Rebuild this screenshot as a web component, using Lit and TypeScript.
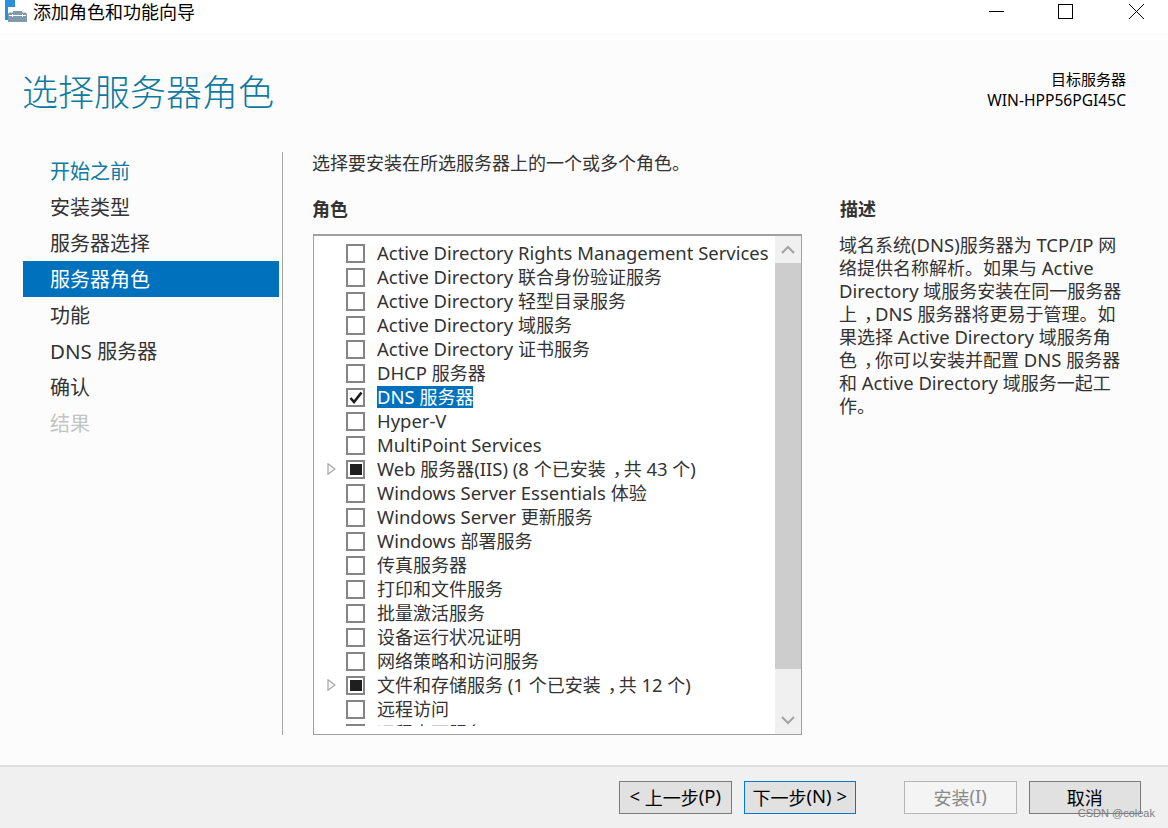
import { LitElement, html, css, svg } from "lit";
import { customElement } from "lit/decorators.js";

type Row = { t: string; s?: "checked" | "mixed"; exp?: boolean; sel?: boolean };
const rows: Row[] = [
  { t: "Active Directory Rights Management Services" },
  { t: "Active Directory 联合身份验证服务" },
  { t: "Active Directory 轻型目录服务" },
  { t: "Active Directory 域服务" },
  { t: "Active Directory 证书服务" },
  { t: "DHCP 服务器" },
  { t: "DNS 服务器", s: "checked", sel: true },
  { t: "Hyper-V" },
  { t: "MultiPoint Services" },
  { t: "Web 服务器(IIS) (8 个已安装，共 43 个)", s: "mixed", exp: true },
  { t: "Windows Server Essentials 体验" },
  { t: "Windows Server 更新服务" },
  { t: "Windows 部署服务" },
  { t: "传真服务器" },
  { t: "打印和文件服务" },
  { t: "批量激活服务" },
  { t: "设备运行状况证明" },
  { t: "网络策略和访问服务" },
  { t: "文件和存储服务 (1 个已安装，共 12 个)", s: "mixed", exp: true },
  { t: "远程访问" },
  { t: "远程桌面服务" },
];
const nav = [
  ["开始之前", "link"],
  ["安装类型", ""],
  ["服务器选择", ""],
  ["服务器角色", "active"],
  ["功能", ""],
  ["DNS 服务器", ""],
  ["确认", ""],
  ["结果", "off"],
];
const desc = [
  "域名系统(DNS)服务器为 TCP/IP 网",
  "络提供名称解析。如果与 Active",
  "Directory 域服务安装在同一服务器",
  "上，DNS 服务器将更易于管理。如",
  "果选择 Active Directory 域服务角",
  "色，你可以安装并配置 DNS 服务器",
  "和 Active Directory 域服务一起工",
  "作。",
];

/* Latin runs are set slightly larger than the CJK ones; the full-width comma sits centred in its cell. */
function rich(t: string) {
  return t.split(/([\x20-\x7e]+|，)/).filter(Boolean).map((p) =>
    p === "，"
      ? html`<span class="comma">，</span>`
      : /^[\x20-\x7e]/.test(p)
        ? html`<span class="la">${p}</span>`
        : p
  );
}

@customElement("app-root")
export class AppRoot extends LitElement {
  static styles = css`
    :host {
      display: block;
      width: 1168px;
      height: 828px;
      overflow: hidden;
      position: relative;
      background: #fcfcfc;
      color: #1a1a1a;
      font-family: "Noto Sans", "Noto Sans CJK SC", sans-serif;
      font-size: 18px;
    }
    .la { font-size: 1.025em; line-height: 1; white-space: pre; }
    .target .la { font-size: 1.04em; }
    .comma { padding-left: 7px; letter-spacing: -7px; }
    .app { display: flex; flex-direction: column; height: 828px; }
    .titlebar {
      height: 33px; flex: none; background: #fff;
      display: flex; align-items: flex-start;
    }
    .appicon { width: 28px; height: 24px; margin-left: 5px; flex: none; }
    .wintitle { line-height: 22px; margin-top: 1px; color: #000; flex: 1; }
    .winbtns { display: flex; }
    .winbtns svg { display: block; }
    .header {
      height: 119px; flex: none; display: flex; justify-content: space-between;
      padding: 0 42px 0 22px; box-sizing: border-box;
    }
    h1 {
      margin: 37px 0 0; font-size: 36px; font-weight: 300; line-height: 46px; color: #0f7a9e;
    }
    .target { margin-top: 36px; text-align: right; font-size: 15px; line-height: 21px; color: #000; }
    .main { flex: 1; display: flex; padding-bottom: 30px; min-height: 0; }
    .nav { width: 256px; margin-left: 23px; flex: none; padding-top: 1px; }
    .nav div { height: 36px; line-height: 38px; padding-left: 27px; font-size: 20px; color: #333; }
    .nav .link { color: #0f7a9e; }
    .nav .active { background: #0072bd; color: #fff; }
    .nav .off { color: #c4c4c4; }
    .sep { width: 1px; margin-left: 3px; background: #a6a6a6; flex: none; }
    .mid { width: 489px; margin-left: 30px; flex: none; display: flex; flex-direction: column; }
    .instr { line-height: 22px; height: 22px; color: #333; white-space: nowrap; margin-left: -1px; }
    .hd { font-weight: 700; line-height: 24px; height: 24px; margin-top: 23px; color: #333; margin-left: -1px; }
    .list {
      margin-top: 13px; flex: 1; min-height: 0; display: flex; box-sizing: border-box;
      border: 1px solid #a0a0a0; border-width: 2px 1px 1px 1px; background: #fff;
    }
    .rowswrap { flex: 1; overflow: hidden; margin-bottom: 8px; padding-top: 5px; }
    .row { height: 24px; display: flex; align-items: center; white-space: nowrap; color: #333; }
    .exp { width: 32px; flex: none; display: flex; justify-content: flex-end; padding-right: 10px; box-sizing: border-box; }
    .box {
      width: 19px; height: 19px; box-sizing: border-box; border: 2px solid #858585;
      flex: none; display: flex; align-items: center; justify-content: center;
      background: #fff;
    }
    .mark { width: 12px; height: 11px; background: #1f1f1f; }
    .lbl { margin-left: 12px; line-height: 22px; height: 22px; }
    .lbl.sel { background: #0072bd; color: #fff; }
    .sb { width: 26px; flex: none; background: #f0f0f0; display: flex; flex-direction: column; }
    .sbbtn { height: 27px; flex: none; display: flex; align-items: center; justify-content: center; }
    .thumb { height: 406px; flex: none; background: #cdcdcd; }
    .track { flex: 1; }
    .desc { margin-left: 38px; flex: 1; }
    .desc .hd { margin-top: 45px; margin-left: 0; }
    .desc .body { margin-top: 13px; margin-left: -1px; font-size: 18px; line-height: 23px; color: #333; white-space: nowrap; }
    .footer {
      height: 63px; flex: none; box-sizing: border-box; background: #f0f0f0;
      border-top: 2px solid #dfdfdf; display: flex; padding: 14px 27px 0 619px;
    }
    .btn {
      height: 33px; width: 113px; box-sizing: border-box; border: 1px solid #7a7a7a;
      background: #e1e1e1; display: flex; align-items: center; justify-content: center;
      font-size: 18px; color: #000; white-space: nowrap; padding-bottom: 2px;
    }
    .btn.def { border: 1px solid #0078d7; margin-left: 12px; }
    .btn.dis { border-color: #b5b5b5; background: #f4f4f4; color: #8a8a8a; margin-left: 48px; }
    .btn.cancel { margin-left: 12px; }
    .wm {
      position: absolute; right: 13px; top: 805px; font-size: 11px; line-height: 16px;
      color: #7f7f7f; font-family: "Liberation Sans", sans-serif;
    }
  `;

  private up = svg`<svg width="14" height="9" viewBox="0 0 14 9"><path d="M1 8 L7 2 L13 8" fill="none" stroke="#a3a3a3" stroke-width="2"/></svg>`;
  private down = svg`<svg width="14" height="9" viewBox="0 0 14 9"><path d="M1 1 L7 7 L13 1" fill="none" stroke="#a3a3a3" stroke-width="2"/></svg>`;

  private row(r: Row) {
    return html`<div class="row">
      <div class="exp">${r.exp
        ? html`<svg width="9" height="12" viewBox="0 0 9 12"><path d="M1 .8 L7.8 6 L1 11.2 Z" fill="none" stroke="#a6a6a6" stroke-width="1.2"/></svg>`
        : null}</div>
      <div class="box">
        ${r.s === "checked"
          ? html`<svg width="14" height="13" viewBox="0 0 14 13"><path d="M1.5 7 L5 11 L12.5 1.5" fill="none" stroke="#1a1a1a" stroke-width="2.6"/></svg>`
          : r.s === "mixed" ? html`<div class="mark"></div>` : null}
      </div>
      <span class="lbl ${r.sel ? "sel" : ""}">${rich(r.t)}</span>
    </div>`;
  }

  render() {
    return html`<div class="app">
      <div class="titlebar">
        <svg class="appicon" viewBox="0 0 28 24">
          <path d="M0 0H10V7H3V20H0Z" fill="#2b90d9"/>
          <path d="M3 22V14.5Q3 12.5 5 12.5H8V11H17V12.5H20Q22 12.5 22 14.5V22Z" fill="#7f9aad"/>
          <rect x="4" y="15" width="17" height="1" fill="#fff"/>
          <rect x="7" y="14" width="1" height="3" fill="#fff"/>
          <rect x="17" y="14" width="1" height="3" fill="#fff"/>
        </svg>
        <div class="wintitle">添加角色和功能向导</div>
        <div class="winbtns">
          <svg width="180" height="24" viewBox="0 0 180 24">
            <path d="M1 11.5H16" stroke="#000" stroke-width="1"/>
            <rect x="70.5" y="4.5" width="14" height="14" fill="none" stroke="#000" stroke-width="1"/>
            <path d="M141 4L156 19M156 4L141 19" stroke="#000" stroke-width="1" fill="none"/>
          </svg>
        </div>
      </div>
      <div class="header">
        <h1>选择服务器角色</h1>
        <div class="target">目标服务器<br /><span class="la">WIN-HPP56PGI45C</span></div>
      </div>
      <div class="main">
        <div class="nav">${nav.map(([t, c]) => html`<div class=${c}>${rich(t)}</div>`)}</div>
        <div class="sep"></div>
        <div class="mid">
          <div class="instr">选择要安装在所选服务器上的一个或多个角色。</div>
          <div class="hd">角色</div>
          <div class="list">
            <div class="rowswrap">${rows.map((r) => this.row(r))}</div>
            <div class="sb">
              <div class="sbbtn">${this.up}</div>
              <div class="thumb"></div>
              <div class="track"></div>
              <div class="sbbtn">${this.down}</div>
            </div>
          </div>
        </div>
        <div class="desc">
          <div class="hd">描述</div>
          <div class="body">${desc.map((d) => html`${rich(d)}<br />`)}</div>
        </div>
      </div>
      <div class="footer">
        <div class="btn">${rich("< 上一步(P)")}</div>
        <div class="btn def">${rich("下一步(N) >")}</div>
        <div class="btn dis">${rich("安装(I)")}</div>
        <div class="btn cancel">取消</div>
      </div>
    </div>
    <div class="wm">CSDN @coleak</div>`;
  }
}
